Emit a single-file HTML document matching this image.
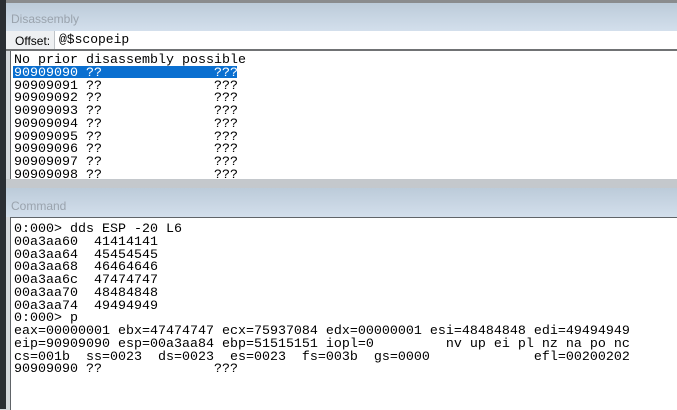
<!DOCTYPE html>
<html><head><style>
body{margin:0;width:677px;height:409px;overflow:hidden;background:#d4d8dc;position:relative;font-family:"Liberation Sans",sans-serif}
.a{position:absolute}
pre{margin:0;font-family:"Liberation Mono",monospace;font-size:13.33px;line-height:12.75px;color:#000}
.title{background:linear-gradient(#bccbd9,#d3dfec);color:#9aa3ad;font-size:12px}
</style></head><body>
<div class="a" style="left:0;top:0;width:677px;height:3px;background:#8a8c8e"></div>
<div class="a" style="left:0;top:0;width:6px;height:409px;background:#2a2e33"></div>
<div class="a title" style="left:6px;top:3px;width:671px;height:28px"><span class="a" style="left:5px;top:9px">Disassembly</span></div>
<div class="a" style="left:6px;top:31px;width:671px;height:19px;background:#eef0f2"></div>
<div class="a" style="left:15px;top:34px;font-size:12px;color:#000">Offset:</div>
<div class="a" style="left:54px;top:31px;width:623px;height:18px;background:#fff;border-left:1px solid #c0c4c8"></div>
<pre class="a" style="left:59px;top:34px;font-size:13px">@$scopeip</pre>
<div class="a" style="left:6px;top:49px;width:671px;height:2px;background:#707274"></div>
<div class="a" style="left:10px;top:51px;width:667px;height:128px;background:#fff;border-left:1px solid #606468"></div>
<div class="a" style="left:13px;top:66px;width:224px;height:12px;background:#0a6fd0"></div>
<pre class="a" style="left:14px;top:55px">No prior disassembly possible
<span style="color:#fff">90909090 ??              ???</span>
90909091 ??              ???
90909092 ??              ???
90909093 ??              ???
90909094 ??              ???
90909095 ??              ???
90909096 ??              ???
90909097 ??              ???
90909098 ??              ???</pre>
<div class="a" style="left:6px;top:179px;width:671px;height:9px;background:#c4c8cc"></div>
<div class="a title" style="left:6px;top:188px;width:671px;height:29px"><span class="a" style="left:5px;top:11px">Command</span></div>
<div class="a" style="left:10px;top:217px;width:667px;height:192px;background:#fff;border-left:1px solid #606468;border-top:1px solid #606468"></div>
<pre class="a" style="left:14px;top:224px">0:000&gt; dds ESP -20 L6
00a3aa60  41414141
00a3aa64  45454545
00a3aa68  46464646
00a3aa6c  47474747
00a3aa70  48484848
00a3aa74  49494949
0:000&gt; p
eax=00000001 ebx=47474747 ecx=75937084 edx=00000001 esi=48484848 edi=49494949
eip=90909090 esp=00a3aa84 ebp=51515151 iopl=0         nv up ei pl nz na po nc
cs=001b  ss=0023  ds=0023  es=0023  fs=003b  gs=0000             efl=00200202
90909090 ??              ???</pre>
</body></html>
